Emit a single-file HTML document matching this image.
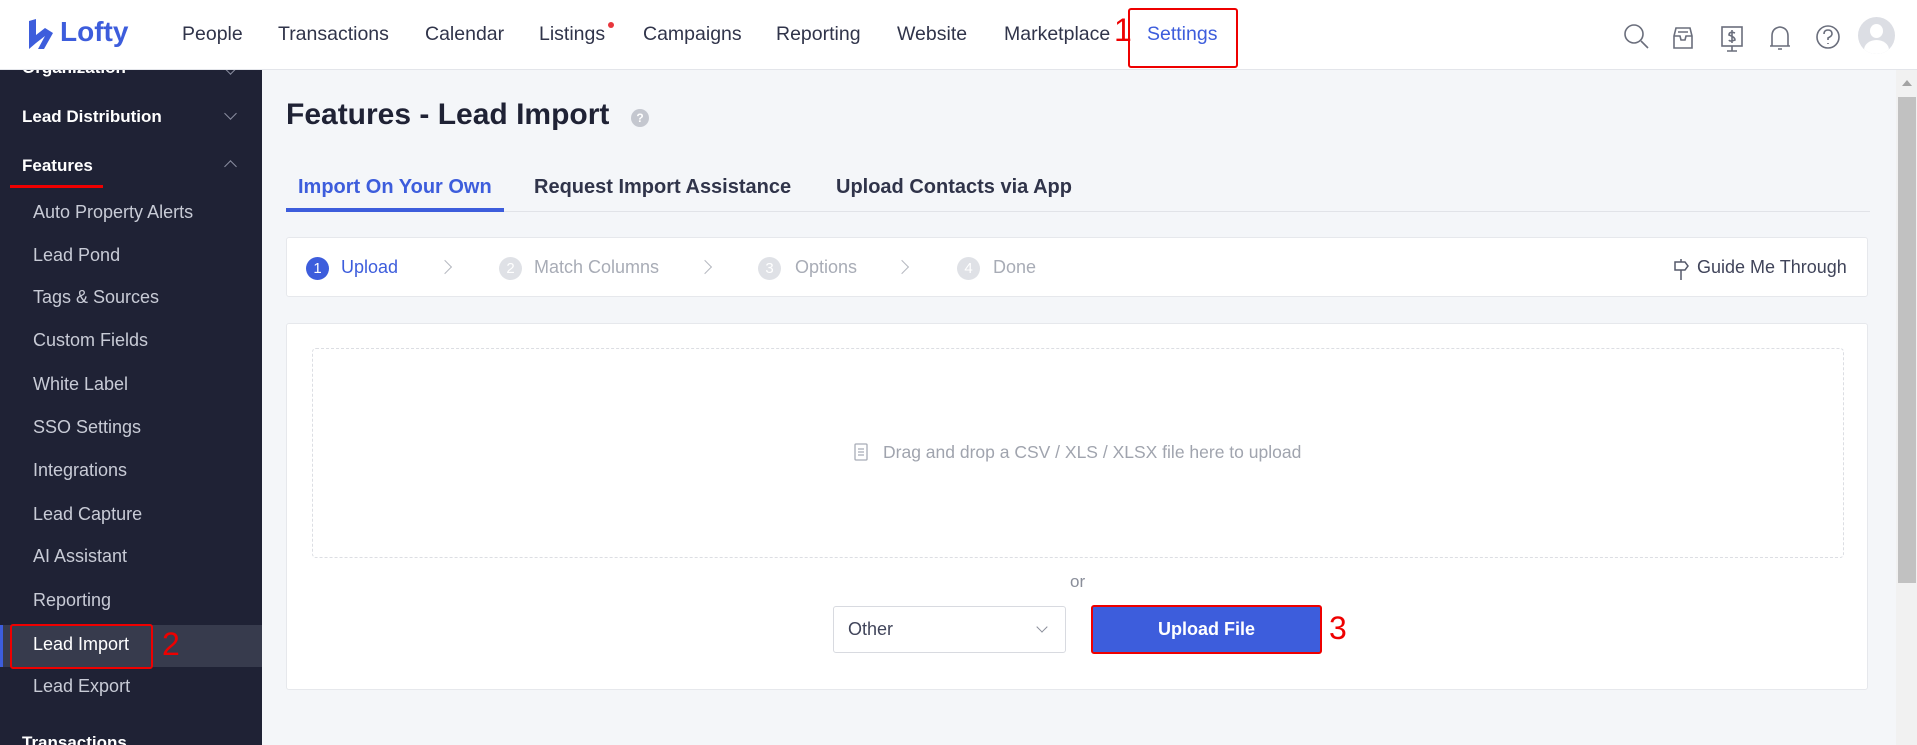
<!DOCTYPE html>
<html><head><meta charset="utf-8"><style>
*{margin:0;padding:0;box-sizing:border-box}
body{width:1917px;height:745px;overflow:hidden;background:#f4f6f9;font-family:"Liberation Sans",sans-serif;position:relative}
.a{position:absolute}
.hdr{left:0;top:0;width:1917px;height:70px;background:#fff;border-bottom:1px solid #e3e5ea}
.nav{top:23px;font-size:19.5px;color:#30344a}
.sb{left:0;top:70px;width:262px;height:675px;background:#1f2235;overflow:hidden}
.si{left:33px;font-size:18px;color:#c8cbd6}
.sh{left:22px;font-size:17px;color:#fff;font-weight:bold}
.chev{left:226px;width:9px;height:9px;border-right:1.5px solid #8a8ea0;border-bottom:1.5px solid #8a8ea0;transform:rotate(45deg)}
.chevu{transform:rotate(-135deg)}
.card{background:#fff;border:1px solid #e6e8ec;border-radius:3px}
.step{top:257px;font-size:18px;color:#a8acb6}
.circ{top:257px;width:23px;height:23px;border-radius:50%;background:#dfe1e6;color:#fff;font-size:15px;text-align:center;line-height:23px}
.sc{top:262px;width:10px;height:10px;border-right:1.5px solid #b5b8c0;border-top:1.5px solid #b5b8c0;transform:rotate(45deg)}
.red{color:#e00;font-size:32px;font-family:"Liberation Sans Narrow","Liberation Sans",sans-serif}
.tab{top:176px;font-size:20px;font-weight:bold;color:#30344a}
</style></head><body>
<div class="a hdr"></div>
<svg class="a" style="left:27px;top:19px" width="28" height="32" viewBox="0 0 28 32"><path d="M2 2 L9 0 L9 16 L18 9 L26 14 L17 30 L11 30 L18 17 L9 24 L2 30 Z" fill="#3d5ddc"/></svg>
<div class="a" style="left:60px;top:16px;font-size:28px;font-weight:bold;color:#3d5ddc">Lofty</div>
<div class="a nav" style="left:182px">People</div>
<div class="a nav" style="left:278px">Transactions</div>
<div class="a nav" style="left:425px">Calendar</div>
<div class="a nav" style="left:539px">Listings</div>
<div class="a" style="left:608px;top:22px;width:6px;height:6px;border-radius:50%;background:#e8363c"></div>
<div class="a nav" style="left:643px">Campaigns</div>
<div class="a nav" style="left:776px">Reporting</div>
<div class="a nav" style="left:897px">Website</div>
<div class="a nav" style="left:1004px">Marketplace</div>
<div class="a red" style="left:1114px;top:12px">1</div>
<div class="a" style="left:1128px;top:8px;width:110px;height:60px;border:2px solid #e00;border-radius:3px"></div>
<div class="a nav" style="left:1147px;color:#3d5ddc">Settings</div>
<svg class="a" style="left:1622px;top:22px" width="240" height="30" viewBox="0 0 240 30" fill="none" stroke="#6a6e7c" stroke-width="1.6">
<circle cx="12" cy="12" r="9"/><path d="M19 19 L26 26"/>
<path d="M54 6 L68 6 L70 14 L70 26 L52 26 L52 14 Z M52 14 L58 14 L59 18 L63 18 L64 14 L70 14 M56 10 L66 10"/>
<rect x="100" y="5" width="20" height="19"/><path d="M110 24 V29 M105 29 H115 M110 8 V21 M113 11 Q107 9 107 13 Q113 15 113 18 Q108 20 107 18"/>
<path d="M150 24 V14 Q150 6 158 5 Q166 6 166 14 V24 Z M148 24 H168 M156 27 H160"/>
<circle cx="206" cy="15" r="11"/><path d="M202 12 Q202 8 206 8 Q210 8 210 12 Q210 14 206 16 V18 M206 21 V22"/>
</svg>
<div class="a" style="left:1858px;top:17px;width:37px;height:37px;border-radius:50%;background:#dcdee4;overflow:hidden"><div class="a" style="left:12px;top:7px;width:13px;height:14px;border-radius:50%;background:#fff"></div><div class="a" style="left:6px;top:23px;width:25px;height:20px;border-radius:50%;background:#fff"></div></div>
<div class="a sb">
<div class="a sh" style="top:-12px">Organization</div><div class="a chev" style="top:-6px"></div>
<div class="a sh" style="top:37px">Lead Distribution</div><div class="a chev" style="top:39px"></div>
<div class="a sh" style="top:86px">Features</div><div class="a chev chevu" style="top:92px"></div>
<div class="a" style="left:10px;top:115px;width:93px;height:3px;background:#e00"></div>
<div class="a si" style="top:132px">Auto Property Alerts</div>
<div class="a si" style="top:175px">Lead Pond</div>
<div class="a si" style="top:217px">Tags &amp; Sources</div>
<div class="a si" style="top:260px">Custom Fields</div>
<div class="a si" style="top:304px">White Label</div>
<div class="a si" style="top:347px">SSO Settings</div>
<div class="a si" style="top:390px">Integrations</div>
<div class="a si" style="top:434px">Lead Capture</div>
<div class="a si" style="top:476px">AI Assistant</div>
<div class="a si" style="top:520px">Reporting</div>
<div class="a" style="left:0;top:555px;width:262px;height:42px;background:#373b4d"></div>
<div class="a" style="left:0;top:555px;width:3px;height:42px;background:#3d5ddc"></div>
<div class="a si" style="top:564px;color:#fff">Lead Import</div>
<div class="a" style="left:10px;top:554px;width:143px;height:45px;border:2px solid #e00;border-radius:3px"></div>
<div class="a red" style="left:162px;top:556px">2</div>
<div class="a si" style="top:606px">Lead Export</div>
<div class="a sh" style="top:663px">Transactions</div>
</div>
<div class="a" style="left:286px;top:98px;font-size:30px;font-weight:bold;color:#1f2235">Features - Lead Import</div>
<div class="a" style="left:631px;top:109px;width:18px;height:18px;border-radius:50%;background:#c4c7cf;color:#fff;font-size:12px;font-weight:bold;text-align:center;line-height:18px">?</div>
<div class="a" style="left:286px;top:211px;width:1584px;height:1px;background:#e1e3e8"></div>
<div class="a tab" style="left:298px;color:#3d5ddc">Import On Your Own</div>
<div class="a" style="left:286px;top:208px;width:218px;height:4px;background:#3d5ddc"></div>
<div class="a tab" style="left:534px">Request Import Assistance</div>
<div class="a tab" style="left:836px">Upload Contacts via App</div>
<div class="a card" style="left:286px;top:237px;width:1582px;height:60px"></div>
<div class="a circ" style="left:306px;background:#3d5ddc">1</div>
<div class="a step" style="left:341px;color:#3d5ddc">Upload</div>
<div class="a sc" style="left:440px"></div>
<div class="a circ" style="left:499px">2</div>
<div class="a step" style="left:534px">Match Columns</div>
<div class="a sc" style="left:700px"></div>
<div class="a circ" style="left:758px">3</div>
<div class="a step" style="left:795px">Options</div>
<div class="a sc" style="left:897px"></div>
<div class="a circ" style="left:957px">4</div>
<div class="a step" style="left:993px">Done</div>
<svg class="a" style="left:1672px;top:259px" width="18" height="22" viewBox="0 0 18 22" fill="none" stroke="#55596a" stroke-width="1.5"><path d="M3 3 H13 L16 7 L13 11 H3 Z M9 11 V21 M9 0 V3"/></svg>
<div class="a step" style="left:1697px;color:#40445a">Guide Me Through</div>
<div class="a card" style="left:286px;top:323px;width:1582px;height:367px"></div>
<div class="a" style="left:312px;top:348px;width:1532px;height:210px;border:1.5px dashed #dcdee3;border-radius:4px"></div>
<svg class="a" style="left:854px;top:443px" width="14" height="18" viewBox="0 0 14 18" fill="none" stroke="#a8acb6" stroke-width="1.3"><rect x="1" y="1" width="12" height="16" rx="1"/><path d="M4 6 H10 M4 9 H10 M4 12 H10"/></svg>
<div class="a" style="left:883px;top:442px;font-size:17.5px;color:#a0a4ae">Drag and drop a CSV / XLS / XLSX file here to upload</div>
<div class="a" style="left:1070px;top:572px;font-size:17px;color:#8a8e9a">or</div>
<div class="a" style="left:833px;top:606px;width:233px;height:47px;border:1px solid #d8dae0;border-radius:3px;background:#fff"></div>
<div class="a" style="left:848px;top:619px;font-size:18px;color:#40445a">Other</div>
<div class="a" style="left:1038px;top:623px;width:8px;height:8px;border-right:1.3px solid #8a8e9a;border-bottom:1.3px solid #8a8e9a;transform:rotate(45deg)"></div>
<div class="a" style="left:1091px;top:605px;width:231px;height:49px;border:2px solid #e00;border-radius:3px;background:#3d5ddc;color:#fff;font-size:18px;font-weight:bold;text-align:center;line-height:45px">Upload File</div>
<div class="a red" style="left:1329px;top:610px">3</div>
<div class="a" style="left:1896px;top:70px;width:21px;height:675px;background:#f1f1f1"></div>
<div class="a" style="left:1898px;top:97px;width:18px;height:486px;background:#c1c1c1"></div>
<div class="a" style="left:1902px;top:80px;width:0;height:0;border-left:5px solid transparent;border-right:5px solid transparent;border-bottom:6px solid #a3a3a3"></div>
</body></html>
